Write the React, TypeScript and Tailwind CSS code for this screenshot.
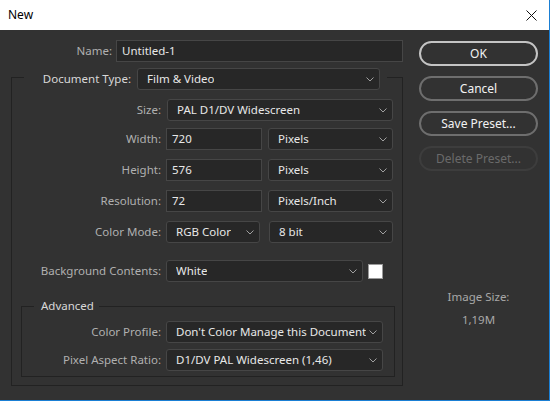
import React from "react";

const font = { fontFamily: '"Noto Sans", "Open Sans", sans-serif' };

function Chevron() {
  return (
    <svg width="8" height="5" viewBox="0 0 8 5" className="shrink-0">
      <polyline points="0.5,0.5 4,4 7.5,0.5" fill="none" stroke="#a0a0a0" strokeWidth="1" />
    </svg>
  );
}

function Select({ value, w }: { value: string; w: string }) {
  return (
    <div className={`${w} h-[22px] flex items-center justify-between rounded-[3px] border border-[#464646] bg-[#272727] pl-[9px] pr-[5px] text-[#e8e8e8]`}>
      <span className="whitespace-nowrap overflow-hidden">{value}</span>
      <Chevron />
    </div>
  );
}

function Input({ value, w }: { value: string; w: string }) {
  return (
    <div className={`${w} h-[22px] flex items-center border border-[#464646] bg-[#272727] pl-[5px] text-[#e8e8e8]`}>
      {value}
    </div>
  );
}

function Label({ text, w }: { text: string; w: string }) {
  return <div className={`${w} shrink-0 text-right text-[#b0b0b0] whitespace-nowrap`}>{text}</div>;
}

function Btn({ text, kind }: { text: string; kind: "ok" | "normal" | "disabled" }) {
  const cls =
    kind === "ok"
      ? "border-2 border-[#c4c4c4] text-[#f2f2f2]"
      : kind === "normal"
      ? "border-2 border-[#6e6e6e] text-[#f2f2f2]"
      : "border-2 border-[#3d3d3d] text-[#6a6a6a]";
  return (
    <div className={`h-[25px] w-[119px] rounded-full flex items-center justify-center text-[12px] ${cls}`}>{text}</div>
  );
}

export default function App() {
  return (
    <div className="w-[550px] h-[401px] flex flex-col text-[11.5px] leading-[16px]" style={font}>
      <div className="h-[30px] bg-white flex items-center justify-between pl-[8px] pr-[12px] border-r border-[#1a7fd4] text-[12px]">
        <span className="text-black">New</span>
        <svg width="11" height="11" viewBox="0 0 11 11">
          <path d="M0.5 0.5 L10.5 10.5 M10.5 0.5 L0.5 10.5" stroke="#111" strokeWidth="1" />
        </svg>
      </div>
      <div className="flex-1 bg-[#323232] flex border-r border-b border-[#1a7fd4]">
        {/* left column */}
        <div className="w-[408px] shrink-0 flex flex-col pt-[10px]">
          <div className="flex items-center h-[22px]">
            <Label text="Name:" w="w-[112px]" />
            <div className="ml-[4px]">
              <Input value="Untitled-1" w="w-[287px]" />
            </div>
          </div>
          <fieldset className="ml-[11px] w-[392px] border border-[#222222] px-0 pb-[8px] mt-[2px]">
            <legend className="ml-[12px] pt-[4px] pr-[7px] flex items-center">
              <div className="w-[107px] text-right text-[#d8d8d8] whitespace-nowrap">Document Type:</div>
              <div className="ml-[6px]">
                <Select value="Film & Video" w="w-[243px]" />
              </div>
            </legend>
            <div className="flex flex-col">
              <div className="flex items-center mt-[9px]">
                <Label text="Size:" w="w-[149px]" />
                <div className="ml-[6px]">
                  <Select value="PAL D1/DV Widescreen" w="w-[226px]" />
                </div>
              </div>
              <div className="flex items-center mt-[7px]">
                <Label text="Width:" w="w-[149px]" />
                <div className="ml-[5px]">
                  <Input value="720" w="w-[96px]" />
                </div>
                <div className="ml-[6px]">
                  <Select value="Pixels" w="w-[125px]" />
                </div>
              </div>
              <div className="flex items-center mt-[9px]">
                <Label text="Height:" w="w-[149px]" />
                <div className="ml-[5px]">
                  <Input value="576" w="w-[96px]" />
                </div>
                <div className="ml-[6px]">
                  <Select value="Pixels" w="w-[125px]" />
                </div>
              </div>
              <div className="flex items-center mt-[9px]">
                <Label text="Resolution:" w="w-[149px]" />
                <div className="ml-[5px]">
                  <Input value="72" w="w-[96px]" />
                </div>
                <div className="ml-[6px]">
                  <Select value="Pixels/Inch" w="w-[125px]" />
                </div>
              </div>
              <div className="flex items-center mt-[9px]">
                <Label text="Color Mode:" w="w-[149px]" />
                <div className="ml-[5px]">
                  <Select value="RGB Color" w="w-[94px]" />
                </div>
                <div className="ml-[9px]">
                  <Select value="8 bit" w="w-[124px]" />
                </div>
              </div>
              <div className="flex items-center mt-[17px]">
                <Label text="Background Contents:" w="w-[149px]" />
                <div className="ml-[5px]">
                  <Select value="White" w="w-[197px]" />
                </div>
                <div className="ml-[5px] w-[15px] h-[15px] bg-white border border-[#9a9a9a]" />
              </div>
            </div>
            <fieldset className="ml-[9px] w-[374px] mt-[16px] border border-[#222222] px-0 pb-[5px]">
              <legend className="ml-[12px] pl-[7px] pr-[5px] text-[#d8d8d8]">Advanced</legend>
              <div className="flex items-center mt-[7px]">
                <Label text="Color Profile:" w="w-[139px]" />
                <div className="ml-[5px]">
                  <Select value="Don't Color Manage this Document" w="w-[217px]" />
                </div>
              </div>
              <div className="flex items-center mt-[6px]">
                <Label text="Pixel Aspect Ratio:" w="w-[139px]" />
                <div className="ml-[5px]">
                  <Select value="D1/DV PAL Widescreen (1,46)" w="w-[217px]" />
                </div>
              </div>
            </fieldset>
          </fieldset>
        </div>
        {/* right column */}
        <div className="flex flex-col pt-[11px] ml-[11px] gap-[10px]">
          <Btn text="OK" kind="ok" />
          <Btn text="Cancel" kind="normal" />
          <Btn text="Save Preset..." kind="normal" />
          <Btn text="Delete Preset..." kind="disabled" />
          <div className="mt-[108px] flex flex-col items-center text-[#a8a8a8] gap-[7px] w-[119px]">
            <span>Image Size:</span>
            <span>1,19M</span>
          </div>
        </div>
      </div>
    </div>
  );
}
